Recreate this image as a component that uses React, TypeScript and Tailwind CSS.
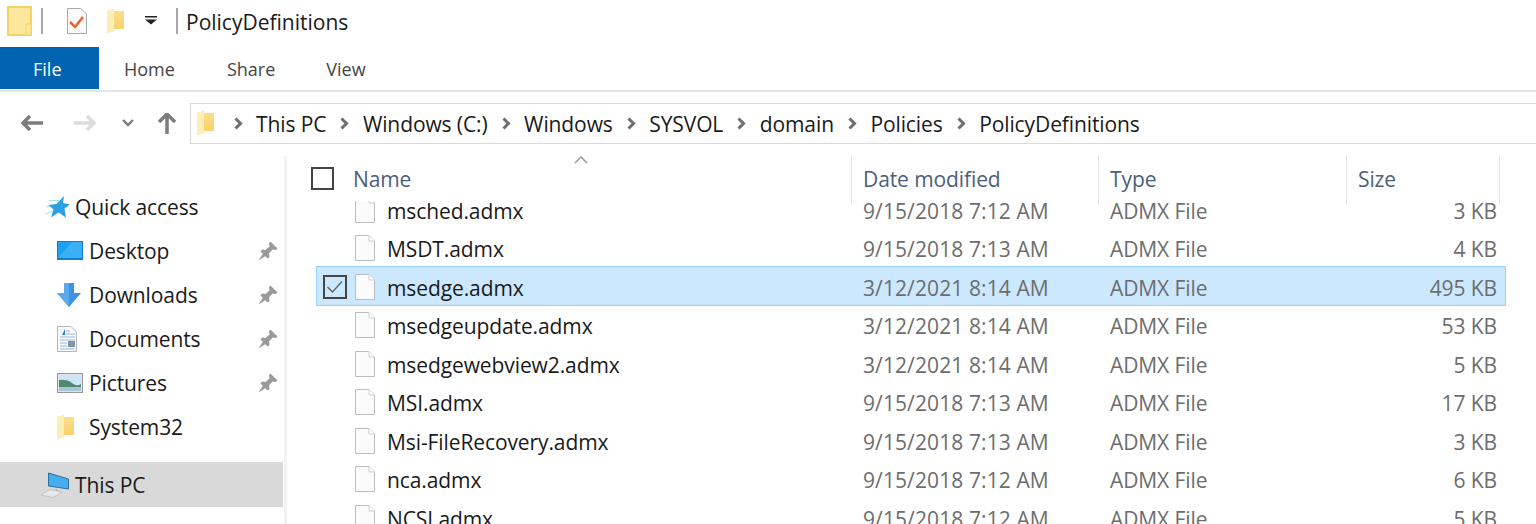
import React from 'react';

const font = { fontFamily: '"Open Sans", "Noto Sans", sans-serif' };

const FolderSmall = ({ className = '' }: { className?: string }) => (
    <svg className={className} width="18" height="24" viewBox="0 0 18 24">
        <defs>
            <linearGradient id="folderFill" x1="0" y1="0" x2="0" y2="1">
                <stop offset="0" stopColor="#fde08c" />
                <stop offset="1" stopColor="#f6cf66" />
            </linearGradient>
        </defs>
        <path d="M0 2 L7 0 V2 H17 V20 H7 V22 L0 24 Z" fill="url(#folderFill)" />
        <path d="M0 2 L7 0 V22 L0 24 Z" fill="#fdeeb5" />
    </svg>
);

const FileIcon = () => (
    <svg width="20" height="26" viewBox="0 0 20 26" className="mb-[3px] shrink-0">
        <path d="M.5.5H14L19.5 6V25.5H.5Z" fill="#fbfbfb" stroke="#bdbdbd" />
        <path d="M14 .5V6H19.5" fill="#fff" stroke="#cfcfcf" />
    </svg>
);

const Pin = () => (
    <svg width="20" height="20" viewBox="0 0 20 20">
        <path d="M12.500 0.500 L19.500 7.500 L17.500 9 L14.500 8.500 L11 12.500 L11.500 16 L9.500 17.500 L2.500 10.500 L4 8.500 L7.500 9 L11.500 5.500 L11 2 Z" fill="#9a9a9a" />
        <path d="M5 12.500 L0.500 19.500 L7.500 15 Z" fill="#9a9a9a" />
    </svg>
);

const Chevron = () => (
    <svg width="9" height="13" viewBox="0 0 9 13" className="shrink-0 mt-[1px]">
        <path d="M1.5 1.5 L6.500 6.500 L1.500 11.500" fill="none" stroke="#6e6e6e" strokeWidth="3" />
    </svg>
);

const Star = () => (
    <svg width="25" height="23" viewBox="0 0 25 23">
        <path d="M14 4.500 L4 4.500 M11 9 L1 11 M8 15 L0 18" stroke="#a8dcf8" strokeWidth="1" />
        <path d="M19 0 L18 7 L25 8.500 L19.500 12.500 L21 21.500 L13.500 16.500 L6 21.500 L8.500 13.500 L3.500 9 L11.500 8 Z" fill="#2b9fe8" />
    </svg>
);

const navItems = [
    {
        label: 'Desktop',
        pin: true,
        icon: (
            <svg width="26" height="20" viewBox="0 0 26 20">
                <rect width="26" height="19" fill="#0d7fd0" />
                <rect x="1" y="1" width="24" height="16" fill="#1ea0f0" />
                <path d="M1 17 L15 1 H25 V17 Z" fill="#3bb0f5" />
            </svg>
        ),
    },
    {
        label: 'Downloads',
        pin: true,
        icon: (
            <svg width="24" height="24" viewBox="0 0 24 24">
                <path d="M7 0 H17 V10 H24 L12 24 L0 10 H7 Z" fill="#3c93e2" />
                <path d="M7 0 H12 V24 L0 10 H7 Z" fill="#5aa9ec" />
            </svg>
        ),
    },
    {
        label: 'Documents',
        pin: true,
        icon: (
            <svg width="20" height="26" viewBox="0 0 20 26">
                <path d="M.5.5H14L19.5 6V25.5H.5Z" fill="#fafafa" stroke="#b5b5b5" />
                <path d="M5 9 L8 3 V9 Z" fill="#2f7fd0" />
                <path d="M9 5H13M9 8H18M3 11H18M3 14H18M3 17H10M3 20H10M3 23H18" stroke="#8fb8dc" />
                <rect x="11" y="15" width="7" height="6" fill="#7f97a8" />
            </svg>
        ),
    },
    {
        label: 'Pictures',
        pin: true,
        icon: (
            <svg width="26" height="20" viewBox="0 0 26 20">
                <rect x=".5" y=".5" width="25" height="19" fill="#dfe3e6" stroke="#999" />
                <rect x="2" y="2" width="22" height="16" fill="#cfe6f5" />
                <path d="M2 7 Q10 6 15 10 T24 11 V14 H2 Z" fill="#4f8a70" />
                <rect x="2" y="14" width="22" height="4" fill="#a8c4d6" />
            </svg>
        ),
    },
    { label: 'System32', pin: false, icon: <FolderSmall /> },
];

const files = [
    { name: 'msched.admx', date: '9/15/2018 7:12 AM', size: '3 KB' },
    { name: 'MSDT.admx', date: '9/15/2018 7:13 AM', size: '4 KB' },
    { name: 'msedge.admx', date: '3/12/2021 8:14 AM', size: '495 KB', selected: true },
    { name: 'msedgeupdate.admx', date: '3/12/2021 8:14 AM', size: '53 KB' },
    { name: 'msedgewebview2.admx', date: '3/12/2021 8:14 AM', size: '5 KB' },
    { name: 'MSI.admx', date: '9/15/2018 7:13 AM', size: '17 KB' },
    { name: 'Msi-FileRecovery.admx', date: '9/15/2018 7:13 AM', size: '3 KB' },
    { name: 'nca.admx', date: '9/15/2018 7:12 AM', size: '6 KB' },
    { name: 'NCSI.admx', date: '9/15/2018 7:12 AM', size: '5 KB' },
];

const crumbs = ['This PC', 'Windows (C:)', 'Windows', 'SYSVOL', 'domain', 'Policies', 'PolicyDefinitions'];

export default function App() {
    return (
        <div className="w-[1536px] h-[524px] overflow-hidden bg-white text-[#1a1a1a] flex flex-col" style={font}>
            {/* title bar */}
            <div className="h-[47px] flex items-center pl-[7px] pb-[6px] shrink-0">
                <svg width="25" height="30" viewBox="0 0 25 30">
                    <rect x="1" y="1" width="23" height="28" fill="#fde79c" stroke="#f5d264" strokeWidth="2" />
                    <rect x="19" y="18" width="5" height="11" fill="#fde79c" stroke="#f5d264" />
                </svg>
                <div className="w-[2px] h-[26px] bg-[#a8a8a8] ml-[9px]" />
                <svg width="20" height="26" viewBox="0 0 20 26" className="ml-[24px]">
                    <path d="M.5.5H14L19.500 6V25.500H.5Z" fill="#fafafa" stroke="#a9a9a9" />
                    <path d="M3 14 L8 19 L16 9" fill="none" stroke="#f0602a" strokeWidth="2.500" />
                </svg>
                <FolderSmall className="ml-[20px]" />
                <svg width="12" height="9" viewBox="0 0 12 9" className="ml-[20px]">
                    <rect width="12" height="1.500" fill="#222" />
                    <path d="M0 3.500 H12 L6 8.500 Z" fill="#222" />
                </svg>
                <div className="w-[2px] h-[26px] bg-[#a8a8a8] ml-[19px]" />
                <span className="ml-[8px] pt-[4px] text-[21px]">PolicyDefinitions</span>
            </div>

            {/* ribbon tabs */}
            <div className="h-[45px] border-b-2 border-[#e6e6e6] shrink-0">
                <div className="h-[42px] flex items-center text-[18px] text-[#444]">
                    <div className="w-[99px] h-full bg-[#0063b1] text-white flex items-center pl-[33px] pt-[2px]">File</div>
                    <span className="ml-[25px] pt-[3px]">Home</span>
                    <span className="ml-[52px] pt-[3px]">Share</span>
                    <span className="ml-[51px] pt-[3px]">View</span>
                </div>
            </div>

            {/* address row */}
            <div className="h-[64px] flex items-center pb-[2px] shrink-0">
                <svg width="22" height="16" viewBox="0 0 22 16" className="ml-[21px]">
                    <path d="M9 1 L2 8 L9 15 M2 8 H22" fill="none" stroke="#7c7c7c" strokeWidth="3.5" />
                </svg>
                <svg width="22" height="16" viewBox="0 0 22 16" className="ml-[31px]">
                    <path d="M13 1 L20 8 L13 15 M0 8 H20" fill="none" stroke="#dcdcdc" strokeWidth="3.5" />
                </svg>
                <svg width="12" height="8" viewBox="0 0 12 8" className="ml-[26px]">
                    <path d="M1 1 L6 6 L11 1" fill="none" stroke="#7c7c7c" strokeWidth="2.4" />
                </svg>
                <svg width="18" height="21" viewBox="0 0 18 21" className="ml-[24px]">
                    <path d="M1 9 L9 1 L17 9 M9 1 V21" fill="none" stroke="#7c7c7c" strokeWidth="3.5" />
                </svg>
                <div className="ml-[14px] flex-1 h-[41px] border border-r-0 border-[#d9d9d9] flex items-center pl-[6px] text-[21px] tracking-[-0.1px]">
                    <FolderSmall className="mr-[4.5px]" />
                    {crumbs.map((c) => (
                        <React.Fragment key={c}>
                            <span className="ml-[14px] mr-[13.5px]"><Chevron /></span>
                            <span className="pt-[3px]">{c}</span>
                        </React.Fragment>
                    ))}
                </div>
            </div>

            <div className="flex flex-1 min-h-0">
                {/* nav pane */}
                <div className="w-[287px] shrink-0 border-r-[3px] border-[#f2f2f2] pt-[29px] text-[21px] tracking-[-0.1px]">
                    <div className="h-[44px] flex items-center pl-[45px] gap-[5px]">
                        <Star />
                        <span className="pt-[2px]">Quick access</span>
                    </div>
                    {navItems.map((item) => (
                        <div key={item.label} className="h-[44px] flex items-center">
                            <div className="w-[58px] ml-[57px] -mr-[26px] shrink-0 flex items-center">{item.icon}</div>
                            <span className="pt-[2px]">{item.label}</span>
                            {item.pin && (
                                <span className="ml-auto mr-[6px]"><Pin /></span>
                            )}
                        </div>
                    ))}
                    <div className="mt-[13px] h-[45px] w-[283px] bg-[#d9d9d9] flex items-center pl-[40px] gap-[5px]">
                        <svg width="30" height="26" viewBox="0 0 30 26" className="shrink-0">
                            <path d="M8.500 1 L28.500 7 V17 L8.500 14 Z" fill="#46aef0" stroke="#2d6f9c" />
                            <path d="M16 17 L19 20 L15 20 Z" fill="#8a9aa5" />
                            <path d="M1 23 L10 17.500 L22 20 L13 25.500 Z" fill="#e9e9e9" stroke="#c2c2c2" />
                        </svg>
                        <span className="pt-[2px]">This PC</span>
                    </div>
                </div>

                {/* file list */}
                <div className="flex-1 min-w-0">
                    <div className="h-[48px] -mb-[3px] flex text-[21px] tracking-[-0.1px] text-[#4c607a] relative z-10">
                        <div className="w-[565px] flex items-end pb-[9px] pl-[24px] border-r border-[#e5e5e5]">
                            <div className="w-[23px] h-[23px] border-2 border-[#444] mb-[5px]" />
                            <span className="ml-[19px]">Name</span>
                        </div>
                        <div className="w-[247px] flex items-end pb-[9px] pl-[11px] border-r border-[#e5e5e5]">Date modified</div>
                        <div className="w-[248px] flex items-end pb-[9px] pl-[11px] border-r border-[#e5e5e5]">Type</div>
                        <div className="w-[153px] flex items-end pb-[9px] pl-[11px] border-r border-[#e5e5e5]">Size</div>
                        <svg width="14" height="8" viewBox="0 0 14 8" className="absolute left-[287px] top-0">
                            <path d="M1 7 L7 1 L13 7" fill="none" stroke="#9a9a9a" strokeWidth="1.500" />
                        </svg>
                    </div>
                    <div className="h-[324px] overflow-hidden">
                        <div className="-mt-[9px] text-[21px] tracking-[-0.1px]">
                            {files.map((f) => (
                                <div
                                    key={f.name}
                                    className={
                                        f.selected
                                            ? 'w-[1190px] ml-[29px] h-[40px] -mt-[2.75px] mb-[1.25px] pt-[4px] relative flex items-center bg-[#cce8ff] border border-[#99d1ff]'
                                            : 'w-[1190px] ml-[29px] h-[38.5px] flex items-center border border-transparent'
                                    }
                                >
                                    <div className="w-[38px] shrink-0 pl-[6px] mb-[3px]">
                                        {f.selected && (
                                            <svg width="24" height="24" viewBox="0 0 24 24" className="block">
                                                <rect x="1" y="1" width="22" height="22" fill="none" stroke="#444" strokeWidth="2" />
                                                <path d="M4.500 12 L9.500 17 L19 6.500" fill="none" stroke="#666" strokeWidth="1.500" />
                                            </svg>
                                        )}
                                    </div>
                                    <FileIcon />
                                    <span className="ml-[12px] w-[476px] shrink-0">{f.name}</span>
                                    <span className="w-[247px] shrink-0 text-[#6d6d6d] tracking-[0.1px]">{f.date}</span>
                                    <span className="w-[240px] shrink-0 text-[#6d6d6d]">ADMX File</span>
                                    <span className="w-[147px] shrink-0 text-right text-[#6d6d6d]">{f.size}</span>
                                </div>
                            ))}
                        </div>
                    </div>
                </div>
            </div>
        </div>
    );
}
